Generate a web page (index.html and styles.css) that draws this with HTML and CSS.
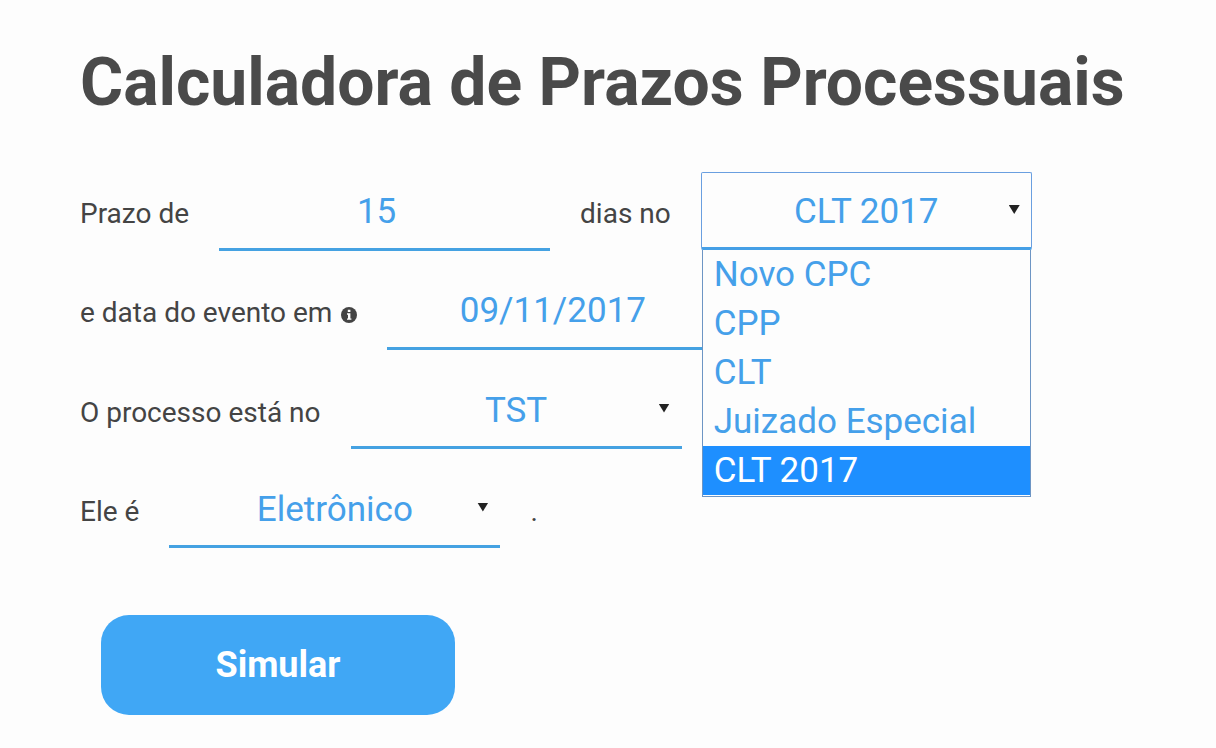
FILE: index.html
```html
<!DOCTYPE html>
<html lang="pt-BR">
<head>
<meta charset="utf-8">
<meta name="viewport" content="width=device-width, initial-scale=1">
<title>Calculadora de Prazos Processuais</title>
<link rel="stylesheet" href="styles.css">
</head>
<body>
<main class="page">
  <h1 class="title">Calculadora de Prazos Processuais</h1>
  <form class="form">
    <div class="row">
      <label for="prazo">Prazo de</label>
      <input class="field field-number" id="prazo" type="text" inputmode="numeric" value="15">
      <label for="codigo">dias no</label>
      <div class="picker">
        <select class="field field-open" id="codigo">
          <option>Novo CPC</option>
          <option>CPP</option>
          <option>CLT</option>
          <option>Juizado Especial</option>
          <option selected>CLT 2017</option>
        </select>
        <ul class="menu" role="listbox" aria-label="Código">
          <li class="item" role="option">Novo CPC</li>
          <li class="item" role="option">CPP</li>
          <li class="item" role="option">CLT</li>
          <li class="item" role="option">Juizado Especial</li>
          <li class="item item-active" role="option" aria-selected="true">CLT 2017</li>
        </ul>
      </div>
    </div>
    <div class="row">
      <label for="data">e data do evento em
        <svg class="info" viewBox="0 0 16 16" aria-hidden="true">
          <circle cx="8" cy="8" r="8" fill="#444"/>
          <path d="M6.800 2.800h2.600v2.200H6.800zM6 6.300h3.400v5.100h1v1.400H6v-1.400h1V7.700H6z" fill="#fff"/>
        </svg>
      </label>
      <input class="field" id="data" type="text" value="09/11/2017">
    </div>
    <div class="row">
      <label for="tribunal">O processo está no</label>
      <div class="picker">
        <select class="field" id="tribunal"><option>TST</option></select>
      </div>
    </div>
    <div class="row">
      <label for="tipo">Ele é</label>
      <div class="picker">
        <select class="field" id="tipo"><option>Eletrônico</option></select>
      </div>
      <span>.</span>
    </div>
    <button class="submit" type="button">Simular</button>
  </form>
</main>
</body>
</html>
```
FILE: styles.css
```css
* {
  box-sizing: border-box;
}

body {
  margin: 0;
  background: #fdfdfd;
  color: #444;
  font-family: Roboto, "Liberation Sans", sans-serif;
  font-size: 28px;
}

.page {
  padding: 43px 80px 32px;
}

.title {
  margin: 0 0 49px;
  color: #4a4a4a;
  font-size: 66px;
  font-weight: 700;
  line-height: 80px;
  white-space: nowrap;
}

.form {
  display: flex;
  flex-direction: column;
  align-items: flex-start;
  gap: 21px;
}

.row {
  display: flex;
  align-items: baseline;
  gap: 30px;
  white-space: nowrap;
}

.picker {
  position: relative;
}

.field {
  display: block;
  width: 331px;
  height: 78px;
  margin: 0;
  padding: 3px 0 0;
  border: 1px solid transparent;
  border-bottom: 3px solid #45a2e2;
  border-radius: 0;
  background: transparent;
  color: #45a0ea;
  font: 35px Roboto, "Liberation Sans", sans-serif;
  text-align: center;
  text-align-last: center;
  appearance: none;
  outline: none;
}

input.field {
  border-width: 0 0 3px;
}

input.field-number {
  padding-right: 16px;
}

select.field {
  border-left-width: 0;
  border-right-width: 0;
}

.picker::after {
  content: "";
  position: absolute;
  top: 33px;
  right: 12px;
  width: 11px;
  height: 9px;
  background: #222;
  clip-path: polygon(0 0, 100% 0, 50% 100%);
  pointer-events: none;
}

select.field-open {
  border: 1px solid #6a9fe0;
  border-bottom: 3px solid #459fe6;
  border-radius: 2px;
}

.menu {
  position: absolute;
  top: 100%;
  left: 1px;
  right: 1px;
  z-index: 1;
  margin: 0;
  padding: 0 0 1px;
  border: 1px solid #6d95c4;
  border-top: 0;
  background: #fdfdfd;
  color: #45a0ea;
  font-size: 35px;
  list-style: none;
}

.item {
  padding: 0 11px;
  line-height: 49px;
}

.item-active {
  background: #1e8fff;
  color: #fff;
}

.info {
  width: 16px;
  height: 16px;
  margin-left: 2px;
  vertical-align: -1px;
}

.submit {
  width: 354px;
  height: 100px;
  margin: 46px 0 0 21px;
  border: 0;
  border-radius: 28px;
  background: #40a7f5;
  color: #fff;
  font: 700 36px Roboto, "Liberation Sans", sans-serif;
}
```
